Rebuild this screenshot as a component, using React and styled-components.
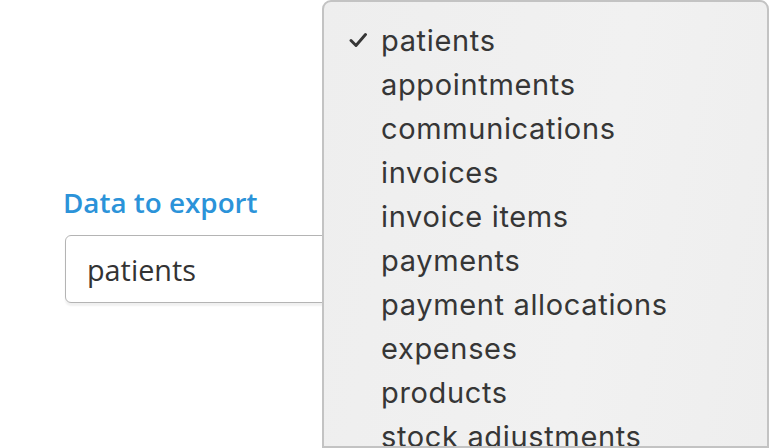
import React from "react";
import styled, { createGlobalStyle } from "styled-components";

const GlobalStyle = createGlobalStyle`
  html, body {
    margin: 0;
    padding: 0;
    background: #ffffff;
    overflow: hidden;
  }
`;

const Page = styled.div`
  position: relative;
  width: 770px;
  height: 448px;
  overflow: hidden;
`;

const Form = styled.div`
  display: flex;
  flex-direction: column;
  padding: 180px 0 0 63px;
`;

const Label = styled.label`
  font-family: "Open Sans", "Liberation Sans", sans-serif;
  font-weight: 600;
  font-size: 27.8px;
  color: #2b93d9;
  line-height: 44px;
  margin-bottom: 11px;
`;

const SelectBox = styled.div`
  box-sizing: border-box;
  width: 420px;
  height: 68px;
  margin-left: 2px;
  display: flex;
  align-items: center;
  padding-left: 21px;
  border: 1.5px solid #b4b4b4;
  border-radius: 6px;
  background: #fff;
  box-shadow: 0 3px 2px rgba(0, 0, 0, 0.06);
  font-family: "Open Sans", "Liberation Sans", sans-serif;
  font-size: 28.8px;
  color: #333;
`;

const Menu = styled.ul`
  position: absolute;
  left: 322px;
  top: 0;
  box-sizing: border-box;
  width: 447px;
  height: 448px;
  margin: 0;
  padding: 16px 0 0;
  list-style: none;
  background: linear-gradient(100deg, #eeeeee, #f1f1f1 60%, #eeeeee);
  border: 2px solid #c3c3c3;
  border-radius: 9px 9px 0 0;
  overflow: hidden;
`;

const Item = styled.li`
  display: flex;
  align-items: center;
  height: 44px;
  padding-left: 25px;
  font-family: Inter, "Liberation Sans", sans-serif;
  font-size: 29px;
  letter-spacing: 0.65px;
  color: #363636;
  white-space: nowrap;
`;

const Check = styled.span`
  width: 32px;
  display: flex;
  align-items: center;
  flex: none;
`;

const options = [
  "patients",
  "appointments",
  "communications",
  "invoices",
  "invoice items",
  "payments",
  "payment allocations",
  "expenses",
  "products",
  "stock adjustments",
];

export default function App() {
  const selected = "patients";
  return (
    <Page>
      <GlobalStyle />
      <Form>
        <Label>Data to export</Label>
        <SelectBox>{selected}</SelectBox>
      </Form>
      <Menu>
        {options.map((opt) => (
          <Item key={opt}>
            <Check>
              {opt === selected && (
                <svg width="19" height="16" viewBox="0 0 19 16">
                  <path
                    d="M2 8.5 L7 13.5 L16.5 2.5"
                    fill="none"
                    stroke="#363636"
                    strokeWidth="2.9"
                    strokeLinecap="round"
                    strokeLinejoin="round"
                  />
                </svg>
              )}
            </Check>
            {opt}
          </Item>
        ))}
      </Menu>
    </Page>
  );
}
